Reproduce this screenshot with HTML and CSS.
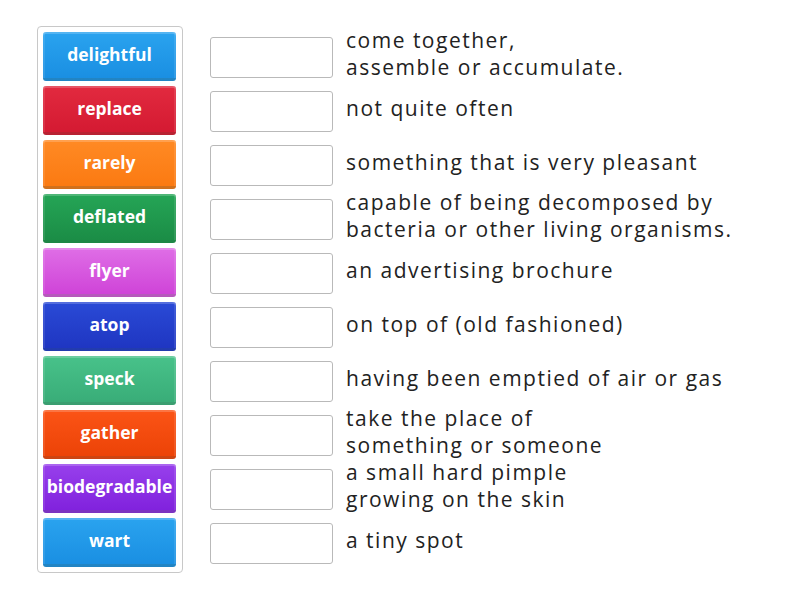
FILE: index.html
```html
<!DOCTYPE html>
<html lang="en">
<head>
  <meta charset="UTF-8">
  <title>Match up</title>
  <link rel="stylesheet" href="styles.css">
</head>
<body>
  <div class="board">
    <!-- Word tiles -->
    <div class="tiles">
      <div class="tile blue">delightful</div>
      <div class="tile red">replace</div>
      <div class="tile orange">rarely</div>
      <div class="tile green">deflated</div>
      <div class="tile pink">flyer</div>
      <div class="tile navy">atop</div>
      <div class="tile mint">speck</div>
      <div class="tile flame">gather</div>
      <div class="tile purple">biodegradable</div>
      <div class="tile blue">wart</div>
    </div>

    <!-- Definitions with drop slots -->
    <div class="defs">
      <div class="row"><div class="slot"></div><p>come together,<br>assemble or accumulate.</p></div>
      <div class="row"><div class="slot"></div><p>not quite often</p></div>
      <div class="row"><div class="slot"></div><p>something that is very pleasant</p></div>
      <div class="row"><div class="slot"></div><p>capable of being decomposed by<br>bacteria or other living organisms.</p></div>
      <div class="row"><div class="slot"></div><p>an advertising brochure</p></div>
      <div class="row"><div class="slot"></div><p>on top of (old fashioned)</p></div>
      <div class="row"><div class="slot"></div><p>having been emptied of air or gas</p></div>
      <div class="row"><div class="slot"></div><p>take the place of<br>something or someone</p></div>
      <div class="row"><div class="slot"></div><p>a small hard pimple<br>growing on the skin</p></div>
      <div class="row"><div class="slot"></div><p>a tiny spot</p></div>
    </div>
  </div>
</body>
</html>
```

FILE: styles.css
```css
body {
  margin: 0;
  background: #fff;
  font-family: "Open Sans", "DejaVu Sans", sans-serif;
}

.board {
  display: flex;
  align-items: flex-start;
  padding: 26px 0 0 37px;
}

.tiles {
  display: flex;
  flex-direction: column;
  gap: 5px;
  padding: 5px 6px 5px 5px;
  border: 1px solid #c8c8c8;
  border-radius: 4px;
}

.tile {
  width: 133px;
  height: 49px;
  box-sizing: border-box;
  display: flex;
  align-items: center;
  justify-content: center;
  color: #fff;
  font-weight: 700;
  font-size: 17.5px;
  border-radius: 3px;
  border-bottom: 3px solid rgba(0, 0, 0, 0.18);
  box-shadow: inset 0 2px 0 rgba(255, 255, 255, 0.2), inset 2px 0 0 rgba(255, 255, 255, 0.1), inset -2px 0 0 rgba(255, 255, 255, 0.1);
  padding-bottom: 2px;
}

.blue { background: linear-gradient(#2aa3ef, #1a8fe2); }
.red { background: linear-gradient(#e22a3f, #d41a32); }
.orange { background: linear-gradient(#ff8a24, #fb7a12); }
.green { background: linear-gradient(#25a556, #1b8d46); }
.pink { background: linear-gradient(#df6ee6, #cf44d8); }
.navy { background: linear-gradient(#2a4ad6, #1f36c2); }
.mint { background: linear-gradient(#48c28a, #39ad78); }
.flame { background: linear-gradient(#fb5416, #ec4307); }
.purple { background: linear-gradient(#9840ec, #8122dd); }

.defs {
  display: flex;
  flex-direction: column;
  gap: 5px;
  padding-top: 6px;
  margin-left: 27px;
}

.row {
  height: 49px;
  display: flex;
  align-items: center;
}

.slot {
  width: 123px;
  height: 41px;
  box-sizing: border-box;
  border: 1px solid #b9b9b9;
  border-radius: 3px;
  background: #fff;
  flex-shrink: 0;
  margin-top: 1px;
}

.row p {
  margin: 0 0 5px 13px;
  font-size: 21px;
  line-height: 27px;
  letter-spacing: 1.5px;
  color: #222;
}
```
